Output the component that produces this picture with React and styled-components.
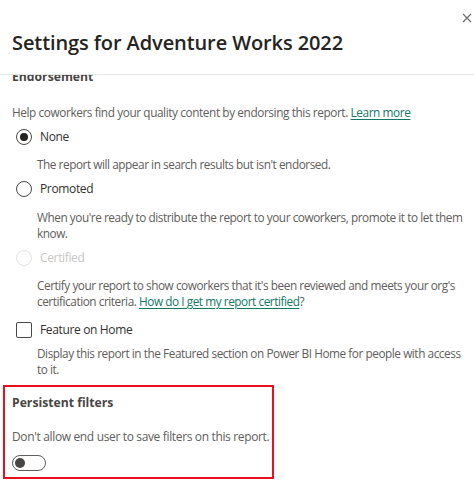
import { useLayoutEffect, useRef, useState } from 'react';
import styled, { createGlobalStyle, css } from 'styled-components';

const GlobalStyle = createGlobalStyle`
  html, body {
    margin: 0;
    padding: 0;
    background: #ffffff;
  }
  body {
    font-family: "Open Sans", "Noto Sans", "Liberation Sans", sans-serif;
    -webkit-font-smoothing: antialiased;
  }
`;

export default function App() {
  const [endorsement, setEndorsement] = useState('none');
  const [featured, setFeatured] = useState(false);
  const [persistent, setPersistent] = useState(false);
  const bodyRef = useRef(null);

  // the pane is shown scrolled a little, the section title sits under the header line
  useLayoutEffect(() => {
    if (bodyRef.current) bodyRef.current.scrollTop = 8;
  }, []);

  return (
    <>
      <GlobalStyle />
      <Panel>
        <Header>
          <Title>Settings for Adventure Works 2022</Title>
          <CloseButton aria-label="Close">
            <svg width="10" height="10" viewBox="0 0 10 10">
              <path d="M1 1 L9 9 M9 1 L1 9" stroke="#6b6a69" strokeWidth="1.1" fill="none" />
            </svg>
          </CloseButton>
        </Header>

        <Body ref={bodyRef}>
          <SectionTitle>Endorsement</SectionTitle>
          <Intro>
            Help coworkers find your quality content by endorsing this report.{' '}
            <Link href="#">Learn more</Link>
          </Intro>

          <OptionList>
            {options.map((opt) => (
              <Option key={opt.id} $id={opt.id}>
                <OptionRow
                  $disabled={opt.disabled}
                  onClick={() => !opt.disabled && setEndorsement(opt.id)}
                >
                  <Radio $checked={endorsement === opt.id} $disabled={opt.disabled} />
                  <OptionLabel $disabled={opt.disabled}>{opt.label}</OptionLabel>
                </OptionRow>
                <Description $id={opt.id}>
                  {opt.description}
                  {opt.link && (
                    <>
                      {' '}
                      <Link href="#">{opt.link}</Link>?
                    </>
                  )}
                </Description>
              </Option>
            ))}

            <Option $id="feature">
              <OptionRow onClick={() => setFeatured(!featured)}>
                <Checkbox $checked={featured} />
                <OptionLabel>Feature on Home</OptionLabel>
              </OptionRow>
              <Description $id="feature">
                Display this report in the Featured section on Power BI Home for people with access
                to it.
              </Description>
            </Option>
          </OptionList>

          <Highlight>
            <SectionTitle>Persistent filters</SectionTitle>
            <SectionText>Don't allow end user to save filters on this report.</SectionText>
            <Toggle
              $on={persistent}
              role="switch"
              aria-checked={persistent}
              onClick={() => setPersistent(!persistent)}
            />
          </Highlight>
        </Body>
      </Panel>
    </>
  );
}

const options = [
  {
    id: 'none',
    label: 'None',
    description: "The report will appear in search results but isn't endorsed.",
  },
  {
    id: 'promoted',
    label: 'Promoted',
    description:
      "When you're ready to distribute the report to your coworkers, promote it to let them know.",
  },
  {
    id: 'certified',
    label: 'Certified',
    disabled: true,
    description:
      "Certify your report to show coworkers that it's been reviewed and meets your org's certification criteria.",
    link: 'How do I get my report certified',
  },
];

const Panel = styled.div`
  height: 487px;
  display: flex;
  flex-direction: column;
  overflow: hidden;
  background: #fff;
`;

const Header = styled.div`
  display: flex;
  align-items: flex-start;
  justify-content: space-between;
  padding: 0 0 0 12px;
  height: 74px;
  border-bottom: 1px solid #e6e6e6;
  flex-shrink: 0;
`;

const Title = styled.h1`
  margin: 29px 0 0;
  font-size: 20px;
  font-weight: 600;
  line-height: 28px;
  color: #252423;
  letter-spacing: -0.1px;
`;

const CloseButton = styled.button`
  background: none;
  border: none;
  padding: 0;
  margin: 13px 2px 0 0;
  width: 10px;
  height: 10px;
  display: flex;
  cursor: pointer;
`;

const Body = styled.div`
  flex: 1;
  min-height: 0;
  overflow: hidden;
  padding: 0 4px 40px 12px;
`;

const textStyle = css`
  font-size: 12px;
  letter-spacing: -0.35px;
`;

const SectionTitle = styled.h2`
  margin: 0;
  font-size: 12.2px;
  font-weight: 700;
  line-height: 20px;
  color: #484644;
`;

const Intro = styled.p`
  margin: 16px 0 0;
  font-size: 11.8px;
  letter-spacing: -0.4px;
  line-height: 18px;
  color: #605e5c;
`;

const Link = styled.a`
  color: #117865;
  text-decoration: underline;
  text-underline-offset: 2px;
`;

const OptionList = styled.div`
  display: flex;
  flex-direction: column;
`;

const optionGap = {
  none: 6,
  promoted: 7,
  certified: 7,
  feature: 11,
};

const descGap = {
  none: 9,
  promoted: 10,
  certified: 9,
  feature: 5,
};

const Option = styled.div`
  margin-top: ${(p) => optionGap[p.$id]}px;
`;

const OptionRow = styled.label`
  display: flex;
  align-items: center;
  height: 20px;
  padding-left: 4px;
  gap: 8px;
  cursor: ${(p) => (p.$disabled ? 'default' : 'pointer')};
`;

const Radio = styled.span`
  box-sizing: border-box;
  width: 16px;
  height: 16px;
  border-radius: 50%;
  border: 1px solid ${(p) => (p.$disabled ? '#e3e3e3' : '#4a4948')};
  display: flex;
  align-items: center;
  justify-content: center;
  flex-shrink: 0;

  ${(p) =>
    p.$checked &&
    css`
      &::after {
        content: '';
        width: 8px;
        height: 8px;
        border-radius: 50%;
        background: #252423;
      }
    `}
`;

const Checkbox = styled.span`
  box-sizing: border-box;
  width: 16px;
  height: 16px;
  border-radius: 2px;
  border: 1px solid #4a4948;
  flex-shrink: 0;
  background: ${(p) => (p.$checked ? '#252423' : '#fff')};
`;

const OptionLabel = styled.span`
  ${textStyle};
  line-height: 18px;
  color: ${(p) => (p.$disabled ? '#c8c6c4' : '#323130')};
`;

const Description = styled.p`
  margin: ${(p) => descGap[p.$id]}px 0 0 25px;
  font-size: 11.8px;
  letter-spacing: -0.45px;
  line-height: 16px;
  color: #605e5c;
`;

const Highlight = styled.section`
  width: 271px;
  box-sizing: border-box;
  margin: 8px 0 0 -9px;
  padding: 6px 0 6px 7px;
  border: 2px solid #e8111b;
  display: flex;
  flex-direction: column;
  align-items: flex-start;
`;

const SectionText = styled.p`
  margin: 15px 0 0;
  ${textStyle};
  line-height: 18px;
  color: #605e5c;
  white-space: nowrap;
`;

const Toggle = styled.button`
  box-sizing: border-box;
  margin-top: 9px;
  width: 34px;
  height: 16px;
  border-radius: 8px;
  border: 1px solid #605e5c;
  background: ${(p) => (p.$on ? '#252423' : '#fff')};
  padding: 0 2px;
  display: flex;
  align-items: center;
  justify-content: ${(p) => (p.$on ? 'flex-end' : 'flex-start')};
  cursor: pointer;

  &::after {
    content: '';
    width: 10px;
    height: 10px;
    border-radius: 50%;
    background: ${(p) => (p.$on ? '#fff' : '#484644')};
  }
`;
